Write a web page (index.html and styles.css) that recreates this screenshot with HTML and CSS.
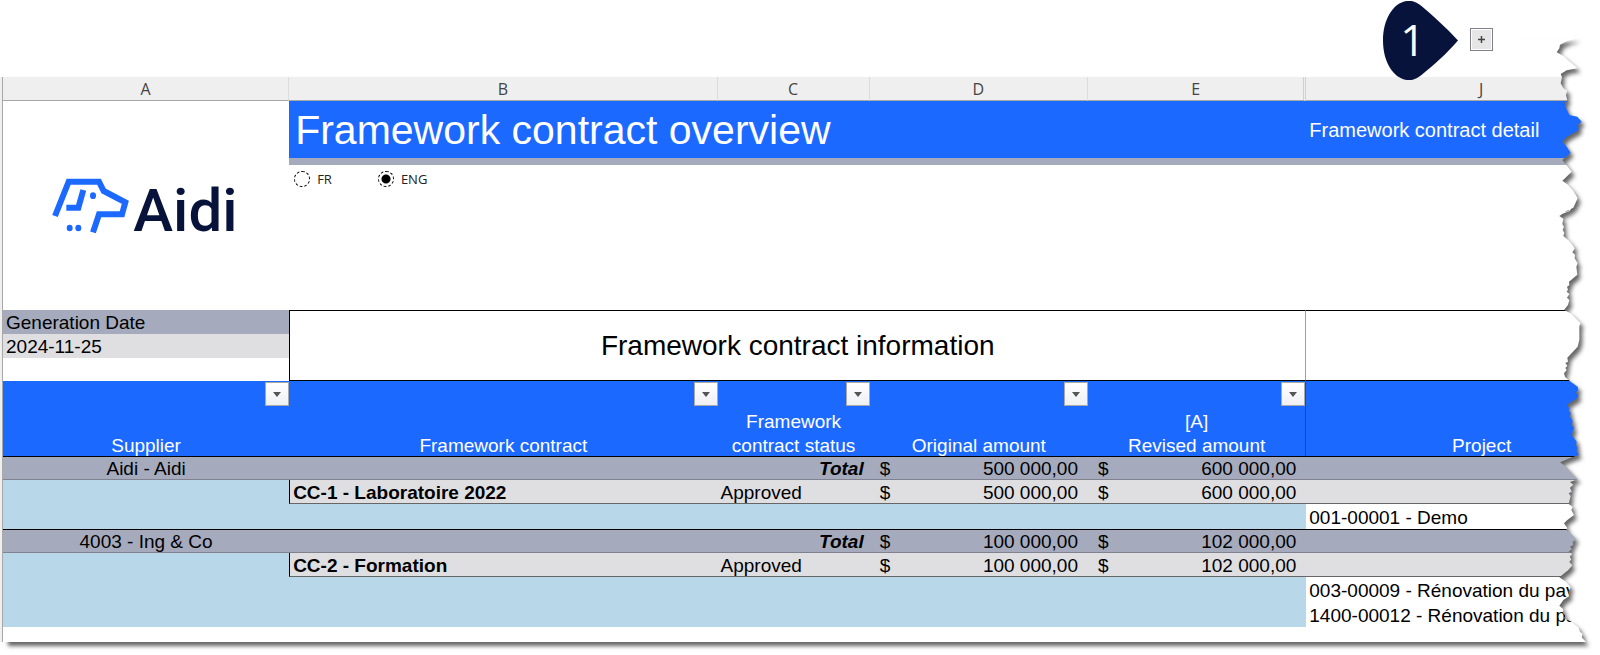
FILE: index.html
```html
<!DOCTYPE html>
<html lang="en">
<head>
    <meta charset="UTF-8">
    <meta name="viewport" content="width=device-width, initial-scale=1.0">
    <title>Framework contract overview</title>
    <link rel="stylesheet" href="styles.css">
</head>
<body>
    <div class="page">
        <div class="outline-bar">
            <svg class="marker" viewBox="0 0 76 80" role="img" aria-label="Step 1">
                <path d="M24 0C10 2 0 19 0 40s10 38 24 40c5 1 10-1 15-5C51 65 64 54 76 40 64 27 51 15 39 5 34 1 29-1 24 0z"/>
                <text x="30" y="56">1</text>
            </svg>
            <button type="button" class="expand" aria-label="Expand columns">
                <svg viewBox="0 0 9 9"><path d="M1 4.500h7M4.500 1v7"/></svg>
            </button>
        </div>

        <div class="sheet">
            <table class="grid">
                <colgroup>
                    <col class="col-a">
                    <col class="col-b">
                    <col class="col-c">
                    <col class="col-d">
                    <col class="col-e">
                    <col>
                </colgroup>
                <thead>
                    <tr class="letters">
                        <th>A</th><th>B</th><th>C</th><th>D</th><th class="hidden-after">E</th><th>J</th>
                    </tr>
                </thead>
                <tbody>
                    <tr class="title-row">
                        <td class="logo-cell" rowspan="3">
                            <svg class="logo" viewBox="150 345 600 186" role="img" aria-label="Aidi">
                                <g class="dog">
                                    <path d="M165 468L206 365H297L311 393L376 427L366 463H297L279 517"/>
                                    <path d="M250 390L235 443H199"/>
                                </g>
                                <g class="dots">
                                    <ellipse cx="279" cy="407" rx="9" ry="10"/>
                                    <ellipse cx="209" cy="504" rx="9" ry="10"/>
                                    <ellipse cx="235" cy="504" rx="9" ry="10"/>
                                </g>
                                <text x="400" y="514">Aidi</text>
                            </svg>
                        </td>
                        <td class="title" colspan="4"><h1>Framework contract overview</h1></td>
                        <td class="subtitle">Framework contract detail</td>
                    </tr>
                    <tr class="band"><td colspan="5"></td></tr>
                    <tr class="options">
                        <td colspan="5">
                            <div class="languages">
                                <label><input type="radio" name="lang" value="fr">FR</label>
                                <label><input type="radio" name="lang" value="en" checked>ENG</label>
                            </div>
                        </td>
                    </tr>
                    <tr class="line">
                        <td class="date-label">Generation Date</td>
                        <td class="info" colspan="4" rowspan="3">Framework contract information</td>
                        <td class="info-next" rowspan="3"></td>
                    </tr>
                    <tr class="line"><td class="date-value">2024-11-25</td></tr>
                    <tr class="line short"><td></td></tr>

                    <tr class="heads">
                        <th><div class="head"><button type="button" class="filter" aria-label="Filter supplier"></button><span>Supplier</span></div></th>
                        <th><div class="head"><button type="button" class="filter" aria-label="Filter framework contract"></button><span>Framework contract</span></div></th>
                        <th><div class="head"><button type="button" class="filter" aria-label="Filter status"></button><span>Framework<br>contract status</span></div></th>
                        <th><div class="head"><button type="button" class="filter" aria-label="Filter original amount"></button><span>Original amount</span></div></th>
                        <th class="split"><div class="head"><button type="button" class="filter" aria-label="Filter revised amount"></button><span>[A]<br>Revised amount</span></div></th>
                        <th><div class="head"><span>Project</span></div></th>
                    </tr>

                    <tr class="total">
                        <td class="supplier">Aidi - Aidi</td>
                        <td></td>
                        <td class="total-label">Total</td>
                        <td class="money"><span>$</span><span>500 000,00</span></td>
                        <td class="money"><span>$</span><span>600 000,00</span></td>
                        <td></td>
                    </tr>
                    <tr class="contract">
                        <td class="empty"></td>
                        <td class="name">CC-1 - Laboratoire 2022</td>
                        <td>Approved</td>
                        <td class="money"><span>$</span><span>500 000,00</span></td>
                        <td class="money"><span>$</span><span>600 000,00</span></td>
                        <td></td>
                    </tr>
                    <tr class="project">
                        <td class="empty" colspan="5"></td>
                        <td>001-00001 - Demo</td>
                    </tr>

                    <tr class="total">
                        <td class="supplier">4003 - Ing &amp; Co</td>
                        <td></td>
                        <td class="total-label">Total</td>
                        <td class="money"><span>$</span><span>100 000,00</span></td>
                        <td class="money"><span>$</span><span>102 000,00</span></td>
                        <td></td>
                    </tr>
                    <tr class="contract">
                        <td class="empty"></td>
                        <td class="name">CC-2 - Formation</td>
                        <td>Approved</td>
                        <td class="money"><span>$</span><span>100 000,00</span></td>
                        <td class="money"><span>$</span><span>102 000,00</span></td>
                        <td></td>
                    </tr>
                    <tr class="project">
                        <td class="empty" colspan="5"></td>
                        <td>003-00009 - Rénovation du pavi</td>
                    </tr>
                    <tr class="project">
                        <td class="empty" colspan="5"></td>
                        <td>1400-00012 - Rénovation du pa</td>
                    </tr>
                </tbody>
            </table>
        </div>

        <!-- torn right edge, with the shadow it throws -->
        <svg class="torn-edge" viewBox="720 0 240 1965" aria-hidden="true">
            <defs>
                <path id="tear" d="M640 115H892L862 123L840 134L838 145L830 157L850 168L870 185L893 205L860 211L842 222L846 232L842 250L850 264L862 272L858 285L863 305H853L857 322L868 345L892 350L905 365L894 374L896 390L860 411L847 425L858 437L872 458L858 470L847 480L860 496L875 515L858 532L847 542L862 553L880 572L893 595L880 623L858 634L838 648L843 640L865 633L889 600L886 610L868 634L848 641L838 648L850 656L847 672L852 680L848 690L853 698L850 708L867 722L880 738L884 746L877 757L885 764L884 775L893 790L889 800L892 824L867 845L868 856L861 860L864 869L860 875L868 882L861 893L868 900L864 915L852 930L872 940L902 970L898 978L898 1020L893 1040L862 1073L864 1085L856 1089L862 1097L856 1104L860 1110L852 1120L855 1131L872 1145L893 1160L895 1170L887 1178L895 1185L893 1193L860 1215L868 1225L866 1232L872 1238L870 1250L878 1262L875 1276L882 1282L875 1305L890 1325L888 1335L893 1345L889 1352L897 1364L870 1374L840 1387L860 1402L875 1420L893 1438L870 1446L880 1454L870 1463L875 1475L866 1480L872 1488L866 1512L878 1520L874 1530L882 1545L862 1560L852 1570L862 1585L858 1590L872 1600L888 1618L878 1625L880 1635L870 1640L876 1648L866 1654L877 1662L869 1670L874 1678L868 1686L877 1696L865 1710L838 1732L858 1745L872 1762L865 1775L868 1788L850 1800L838 1817L850 1828L848 1840L858 1848L850 1854L872 1864L895 1882L900 1895L908 1902L905 1912L918 1926H640z"/>
                <filter id="soft" x="-20%" y="-5%" width="140%" height="110%" color-interpolation-filters="sRGB"><feGaussianBlur stdDeviation="6"/></filter>
                <mask id="outside" maskUnits="userSpaceOnUse" x="700" y="0" width="260" height="1965">
                    <rect x="700" width="260" height="1965" fill="#fff"/>
                    <use href="#tear" fill="#000"/>
                </mask>
            </defs>
            <g mask="url(#outside)">
                <rect x="700" width="260" height="1965" fill="#fff"/>
                <use href="#tear" x="9" y="12" filter="url(#soft)" fill="#666"/>
            </g>
        </svg>
    </div>
</body>
</html>
```
FILE: styles.css
```css
* {
    box-sizing: border-box;
}
body {
    margin: 0;
    background-color: #fff;
    color: #000;
    font-family: "Liberation Sans", Arial, sans-serif;
    font-size: 19px;
    line-height: 24px;
}
.page {
    position: relative;
    overflow: hidden;
    padding-bottom: 13px;
}

/* strip above the sheet */
.outline-bar {
    display: flex;
    justify-content: flex-end;
    align-items: flex-start;
    gap: 12px;
    height: 77px;
    padding: 1px 107px 0 0;
}
.marker {
    position: relative;
    z-index: 1;
    flex: none;
    width: 75px;
    height: 79px;
    fill: #08133b;
}
.marker text {
    fill: #fff;
    font-family: "Open Sans", sans-serif;
    font-size: 44px;
    text-anchor: middle;
}
.expand {
    display: flex;
    align-items: center;
    justify-content: center;
    width: 23px;
    height: 23px;
    margin-top: 27px;
    padding: 0;
    border: 1px solid #80808c;
    background-color: #e6e6e6;
    box-shadow: inset 0 0 0 1px #fff;
}
.expand svg {
    width: 9px;
    height: 9px;
    stroke: #444;
    stroke-width: 1.5;
}

.sheet {
    overflow: hidden;
    padding: 0 0 15px 1px;
    border-left: 2px solid #efefef;
    background-color: #fff;
    box-shadow: inset 1px 0 #a8a8a8, 8px 4px 4px #666;
}
.grid {
    width: 103.57%;
    table-layout: fixed;
    border-collapse: separate;
    border-spacing: 0;
}
.grid td,
.grid th {
    padding: 0 3px;
    font-weight: normal;
    text-align: left;
    white-space: nowrap;
}
.col-a { width: 17.3%; }
.col-b { width: 25.9%; }
.col-c { width: 9.2%; }
.col-d,
.col-e { width: 13.2%; }

.grid .letters th {
    height: 24px;
    border-right: 1px solid #dcdcdc;
    border-bottom: 1px solid #a8a8a8;
    background-color: #efefef;
    color: #444;
    font-family: "Open Sans", sans-serif;
    font-size: 16px;
    line-height: 22px;
    text-align: center;
}
.grid .letters .hidden-after {
    border-right: 3px double #d0d0d0;
}

/* title and logo */
.title-row td {
    height: 57px;
    background-color: #1c69ff;
    color: #fff;
}
.grid .title {
    padding-left: 6px;
}
.title h1 {
    margin: 0;
    font-size: 41px;
    font-weight: normal;
    line-height: 56px;
}
.subtitle {
    font-size: 20px;
}
.grid .logo-cell {
    padding-left: 47px;
    background-color: #fff;
}
.logo {
    width: 200px;
    height: 62px;
    vertical-align: middle;
}
.dog {
    fill: none;
    stroke: #1c69ff;
    stroke-width: 18;
}
.dots {
    fill: #1c69ff;
}
.logo text {
    fill: #08133b;
    font-family: Roboto, "Liberation Sans", sans-serif;
    font-size: 180px;
    font-weight: 500;
}
.band td {
    height: 7px;
    background-color: #a5abbd;
}
.options td {
    height: 145px;
    vertical-align: top;
}
.languages {
    display: flex;
    gap: 46px;
    padding: 6px 2px;
}
.languages label {
    display: flex;
    align-items: center;
    gap: 7px;
    font-family: "Open Sans", sans-serif;
    font-size: 13px;
    line-height: 16px;
    color: #222;
}
.languages input {
    appearance: none;
    width: 16px;
    height: 16px;
    margin: 0;
    border: 1px dashed #000;
    border-radius: 50%;
}
.languages input:checked {
    background: radial-gradient(circle, #000 4px, transparent 5px);
}

/* generation date and section names */
.line td {
    height: 24px;
    line-height: 23px;
}
.short td {
    height: 23px;
}
.line .date-label {
    background-color: #a5abbd;
}
.date-value {
    background-color: #dfdfe1;
}
.grid .info {
    border: 1px solid #000;
    border-right-color: #a0a0a0;
    font-size: 28px;
    text-align: center;
}
.info-next {
    border-top: 1px solid #000;
    border-bottom: 1px solid #000;
}

.grid .heads th {
    height: 75px;
    padding: 0;
    background-color: #1c69ff;
    color: #fff;
}
.grid .heads .split {
    border-right: 1px solid #134ab8;
}
.head {
    display: flex;
    flex-direction: column;
    height: 75px;
    text-align: center;
}
.head span {
    margin: auto 0 -2px;
}
.filter {
    align-self: flex-end;
    flex: none;
    width: 24px;
    height: 24px;
    margin-top: 1px;
    padding: 0;
    border: 1px solid #a8a8a8;
    background: linear-gradient(#fff, #eef0f4);
}
.filter::after {
    content: "";
    display: block;
    width: 0;
    margin: 0 auto;
    border: 4px solid transparent;
    border-top: 5px solid #555;
    border-bottom: 0;
}

/* rows */
.grid .total td {
    height: 24px;
    padding-top: 2px;
    border-top: 1px solid #000;
    border-bottom: 1px solid #80838f;
    background-color: #a5abbd;
    line-height: 20px;
}
.grid .total .supplier {
    text-align: center;
}
.grid .total .total-label {
    padding-right: 6px;
    font-weight: bold;
    font-style: italic;
    text-align: right;
}
.grid .contract td {
    height: 24px;
    padding-top: 2px;
    border-bottom: 1px solid #666;
    background-color: #dfdfe1;
    line-height: 21px;
}
.grid .contract .name {
    border-left: 1px solid #000;
    font-weight: bold;
}
.grid .money.money {
    padding-right: 10px;
    padding-left: 10px;
    text-align: right;
}
.money span:first-child {
    float: left;
}
.grid .project td {
    height: 25px;
    padding-top: 2px;
    line-height: 23px;
}
.grid tr .empty.empty {
    border-bottom: 0;
    background-color: #b8d7e9;
}

.torn-edge {
    position: absolute;
    top: 0;
    right: 0;
    width: 80px;
    height: 655px;
}
```
